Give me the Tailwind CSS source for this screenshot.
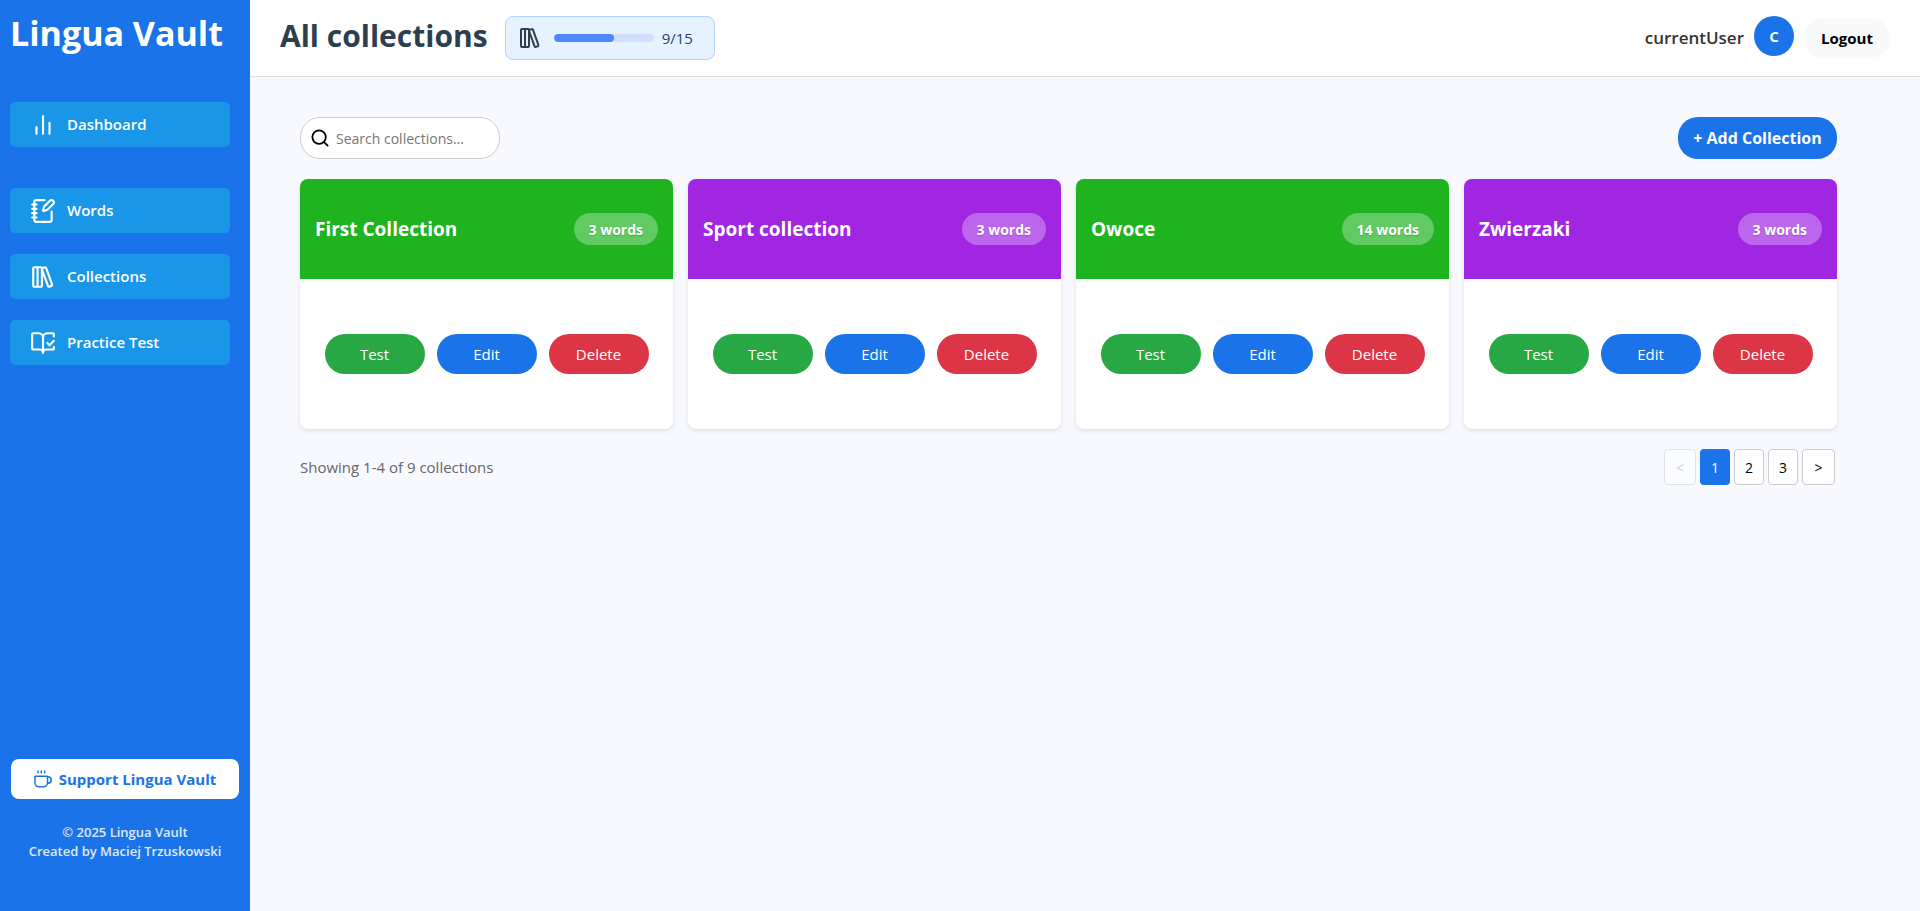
<!DOCTYPE html>
<html lang="en">
<head>
<meta charset="utf-8">
<title>Lingua Vault</title>
<script src="https://cdn.jsdelivr.net/npm/@tailwindcss/browser@4"></script>
</head>
<body class="flex min-h-screen bg-[#f8f9ff] font-['Open_Sans',sans-serif] text-[15px]">
<svg class="hidden" aria-hidden="true">
  <symbol id="library" viewBox="0 0 24 24"><rect width="8" height="18" x="3" y="3" rx="1"/><path d="M7 3v18"/><path d="M20.4 18.9c.2.5-.1 1.1-.6 1.3l-1.9.7c-.5.2-1.1-.1-1.3-.6L11.1 5.1c-.2-.5.1-1.1.6-1.3l1.9-.7c.5-.2 1.1.1 1.3.6Z"/></symbol>
</svg>
<aside class="flex w-[250px] shrink-0 flex-col bg-[#1a73e8] text-white">
  <div class="flex h-[66px] items-center pl-[10px] text-[34px] font-bold whitespace-nowrap">Lingua Vault</div>
  <nav class="mt-9 mr-5 ml-[10px] flex flex-col gap-[21px] font-semibold">
    <a href="#" class="mb-5 flex h-[45px] items-center gap-[11px] rounded-[5px] bg-[#1a96e8] pl-5"><svg class="size-[26px] fill-none stroke-current stroke-2" stroke-linecap="round" stroke-linejoin="round" viewBox="0 0 24 24"><path d="M18 20V10M12 20V4M6 20v-6"/></svg>Dashboard</a>
    <a href="#" class="flex h-[45px] items-center gap-[11px] rounded-[5px] bg-[#1a96e8] pl-5"><svg class="size-[26px] fill-none stroke-current stroke-2" stroke-linecap="round" stroke-linejoin="round" viewBox="0 0 24 24"><path d="M13.4 2H6a2 2 0 0 0-2 2v16a2 2 0 0 0 2 2h12a2 2 0 0 0 2-2v-7.4M2 6h4M2 10h4M2 14h4M2 18h4"/><path d="M21.378 5.626a1 1 0 1 0-3.004-3.004l-5.01 5.012a2 2 0 0 0-.506.854l-.837 2.87a.5.5 0 0 0 .62.62l2.87-.837a2 2 0 0 0 .854-.506z"/></svg>Words</a>
    <a href="#" class="flex h-[45px] items-center gap-[11px] rounded-[5px] bg-[#1a96e8] pl-5"><svg class="size-[26px] fill-none stroke-current stroke-2" stroke-linecap="round" stroke-linejoin="round"><use href="#library"/></svg>Collections</a>
    <a href="#" class="flex h-[45px] items-center gap-[11px] rounded-[5px] bg-[#1a96e8] pl-5"><svg class="size-[26px] fill-none stroke-current stroke-2" stroke-linecap="round" stroke-linejoin="round" viewBox="0 0 24 24"><path d="M12 21V7M16 12l2 2 4-4"/><path d="M22 6V4a1 1 0 0 0-1-1h-5a4 4 0 0 0-4 4 4 4 0 0 0-4-4H3a1 1 0 0 0-1 1v13a1 1 0 0 0 1 1h6a3 3 0 0 1 3 3 3 3 0 0 1 3-3h6a1 1 0 0 0 1-1v-1.3"/></svg>Practice Test</a>
  </nav>
  <div class="mt-auto px-[11px] pb-[50px] text-center">
    <a href="#" class="flex h-10 items-center justify-center gap-[7px] rounded-lg bg-white font-bold whitespace-nowrap text-[#1a73e8]"><svg class="size-[18px] fill-none stroke-current" stroke-width="1.5" stroke-linecap="round" stroke-linejoin="round" viewBox="0 0 18 18"><path d="M1 6.200h12.500v6.600a4 4 0 0 1-4 4H5a4 4 0 0 1-4-4zM13.500 6.800H14a3.200 3.200 0 0 1 0 6.400h-.5M4 1v1.800M7.300 1v1.800M10.600 1v1.800"/></svg>Support Lingua Vault</a>
    <p class="mt-6 text-[13px] leading-[19px] font-semibold text-white/85">© 2025 Lingua Vault<br>Created by Maciej Trzuskowski</p>
  </div>
</aside>
<div class="flex min-w-0 grow flex-col">
  <header class="flex h-[77px] items-start border-b border-[#dee2e6] bg-white px-[30px]">
    <h1 class="pt-[14px] text-[30px] leading-[44px] font-bold text-[#2c3e50]">All collections</h1>
    <div class="mt-4 ml-[17px] flex h-11 w-[210px] items-center rounded-lg border border-[#b3d1ff] bg-[#e6f2ff] pl-3 text-[#2c3e50]">
      <svg class="size-6 fill-none stroke-current stroke-2" stroke-linecap="round" stroke-linejoin="round"><use href="#library"/></svg>
      <div class="ml-3 h-2 w-[100px] overflow-hidden rounded bg-[#d0deff]" role="progressbar" aria-label="Collections used" aria-valuenow="9" aria-valuemax="15"><div class="h-full rounded bg-[#4d88ff]" style="width:60%"></div></div>
      <span class="ml-2 text-[15px] font-medium text-[#1f3f77]">9/15</span>
    </div>
    <div class="ml-auto flex items-start">
      <span class="pt-4 text-[17px] leading-[44px] font-semibold text-[#333]">currentUser</span>
      <span class="mt-4 ml-[10px] flex size-10 items-center justify-center rounded-full bg-[#1a73e8] text-[15px] font-bold text-white">C</span>
      <button class="mt-[18px] ml-[10px] h-10 w-[86px] rounded-[20px] bg-[#f8f9fa] font-bold text-black">Logout</button>
    </div>
  </header>
  <main class="pt-10 pr-[83px] pl-[50px]">
    <div class="flex items-center justify-between">
      <label class="flex h-[42px] w-[200px] items-center gap-[7px] rounded-[20px] border border-[#ccc] bg-white pl-[10px]">
        <svg class="size-[18px] shrink-0 fill-none stroke-black stroke-2" stroke-linecap="round" viewBox="0 0 20 20"><circle cx="9" cy="9" r="7.500"/><path d="m14.500 14.500 4 4"/></svg>
        <input type="text" aria-label="Search collections" placeholder="Search collections..." class="w-full min-w-0 bg-transparent text-[14px] outline-none placeholder:text-[#757575]">
      </label>
      <button class="h-[42px] w-[159px] rounded-[20px] bg-[#1a73e8] text-base font-bold whitespace-nowrap text-white">+ Add Collection</button>
    </div>
    <div class="mt-5 grid grid-cols-4 gap-[15px] text-white">
      <article class="overflow-hidden rounded-lg bg-white shadow-[0_2px_4px_rgba(0,0,0,0.1)]">
        <div class="flex h-[100px] items-center justify-between bg-[#1fb320] px-[15px]"><h2 class="text-[19px] font-bold">First Collection</h2><span class="flex h-8 items-center rounded-2xl bg-white/30 px-[15px] text-[14px] font-bold text-shadow-xs">3 words</span></div>
        <div class="flex h-[150px] items-center justify-center gap-3"><button class="h-10 w-[100px] rounded-[20px] bg-[#28a745]">Test</button><button class="h-10 w-[100px] rounded-[20px] bg-[#1a73e8]">Edit</button><button class="h-10 w-[100px] rounded-[20px] bg-[#dc3545]">Delete</button></div>
      </article>
      <article class="overflow-hidden rounded-lg bg-white shadow-[0_2px_4px_rgba(0,0,0,0.1)]">
        <div class="flex h-[100px] items-center justify-between bg-[#a026e2] px-[15px]"><h2 class="text-[19px] font-bold">Sport collection</h2><span class="flex h-8 items-center rounded-2xl bg-white/30 px-[15px] text-[14px] font-bold text-shadow-xs">3 words</span></div>
        <div class="flex h-[150px] items-center justify-center gap-3"><button class="h-10 w-[100px] rounded-[20px] bg-[#28a745]">Test</button><button class="h-10 w-[100px] rounded-[20px] bg-[#1a73e8]">Edit</button><button class="h-10 w-[100px] rounded-[20px] bg-[#dc3545]">Delete</button></div>
      </article>
      <article class="overflow-hidden rounded-lg bg-white shadow-[0_2px_4px_rgba(0,0,0,0.1)]">
        <div class="flex h-[100px] items-center justify-between bg-[#1fb320] px-[15px]"><h2 class="text-[19px] font-bold">Owoce</h2><span class="flex h-8 items-center rounded-2xl bg-white/30 px-[15px] text-[14px] font-bold text-shadow-xs">14 words</span></div>
        <div class="flex h-[150px] items-center justify-center gap-3"><button class="h-10 w-[100px] rounded-[20px] bg-[#28a745]">Test</button><button class="h-10 w-[100px] rounded-[20px] bg-[#1a73e8]">Edit</button><button class="h-10 w-[100px] rounded-[20px] bg-[#dc3545]">Delete</button></div>
      </article>
      <article class="overflow-hidden rounded-lg bg-white shadow-[0_2px_4px_rgba(0,0,0,0.1)]">
        <div class="flex h-[100px] items-center justify-between bg-[#a026e2] px-[15px]"><h2 class="text-[19px] font-bold">Zwierzaki</h2><span class="flex h-8 items-center rounded-2xl bg-white/30 px-[15px] text-[14px] font-bold text-shadow-xs">3 words</span></div>
        <div class="flex h-[150px] items-center justify-center gap-3"><button class="h-10 w-[100px] rounded-[20px] bg-[#28a745]">Test</button><button class="h-10 w-[100px] rounded-[20px] bg-[#1a73e8]">Edit</button><button class="h-10 w-[100px] rounded-[20px] bg-[#dc3545]">Delete</button></div>
      </article>
    </div>
    <div class="mt-5 flex items-center justify-between pr-[2px]">
      <p class="text-[15px] font-medium text-[#666]">Showing 1-4 of 9 collections</p>
      <div class="flex gap-1 text-[14px] text-black">
        <button disabled aria-label="Previous page" class="h-9 w-8 rounded border border-[#ccc] bg-white opacity-50"><span class="text-[#aaa]">&lt;</span></button>
        <button class="h-9 w-[30px] rounded bg-[#1a73e8] text-white">1</button>
        <button class="h-9 w-[30px] rounded border border-[#ccc] bg-white">2</button>
        <button class="h-9 w-[30px] rounded border border-[#ccc] bg-white">3</button>
        <button aria-label="Next page" class="h-9 w-[33px] rounded border border-[#ccc] bg-white">&gt;</button>
      </div>
    </div>
  </main>
</div>
</body>
</html>
